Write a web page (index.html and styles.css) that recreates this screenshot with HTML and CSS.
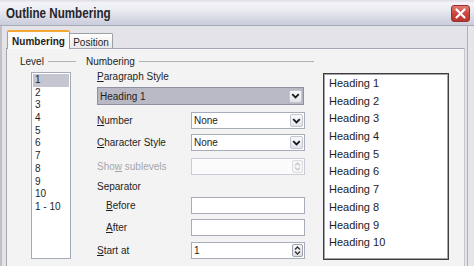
FILE: index.html
```html
<!DOCTYPE html>
<html>
<head>
<meta charset="utf-8">
<title>Outline Numbering</title>
<link rel="stylesheet" href="styles.css">
</head>
<body>
<div class="titlebar">
  <span class="title">Outline Numbering</span>
  <span class="close"><svg width="17" height="15" viewBox="0 0 17 15"><path d="M4.5 3.5 L12.5 11.5 M12.5 3.5 L4.5 11.5" stroke="#fff" stroke-width="2.2" stroke-linecap="round"/></svg></span>
</div>
<div class="main">
  <div class="tabs">
    <div class="tab active">Numbering</div>
    <div class="tab">Position</div>
  </div>
  <div class="panel">
    <div class="col-level">
      <div class="legend"><span>Level</span><i></i></div>
      <ul class="levels">
        <li class="sel">1</li>
        <li>2</li>
        <li>3</li>
        <li>4</li>
        <li>5</li>
        <li>6</li>
        <li>7</li>
        <li>8</li>
        <li>9</li>
        <li>10</li>
        <li>1 - 10</li>
      </ul>
    </div>
    <div class="col-num">
      <div class="legend"><span>Numbering</span><i></i></div>
      <div class="lbl para"><u>P</u>aragraph Style</div>
      <div class="select big"><span>Heading 1</span><b class="btn"><svg width="9" height="6" viewBox="0 0 9 6"><path d="M1.2 1.2 L4.5 4.5 L7.8 1.2" fill="none" stroke="#1a1a1a" stroke-width="1.8"/></svg></b></div>
      <div class="row r-number"><label><u>N</u>umber</label><div class="select"><span>None</span><b class="btn"><svg width="9" height="6" viewBox="0 0 9 6"><path d="M1.2 1.2 L4.5 4.5 L7.8 1.2" fill="none" stroke="#1a1a1a" stroke-width="1.8"/></svg></b></div></div>
      <div class="row r-char"><label><u>C</u>haracter Style</label><div class="select"><span>None</span><b class="btn"><svg width="9" height="6" viewBox="0 0 9 6"><path d="M1.2 1.2 L4.5 4.5 L7.8 1.2" fill="none" stroke="#1a1a1a" stroke-width="1.8"/></svg></b></div></div>
      <div class="row r-show disabled"><label>Sho<u>w</u> sublevels</label><div class="spin off"><span></span><b class="sbtn"><svg width="7" height="11" viewBox="0 0 7 11"><path d="M1 4.5 L3.5 2 L6 4.5 M1 6.5 L3.5 9 L6 6.5" fill="none" stroke="#c4c4c8" stroke-width="1.2"/></svg></b></div></div>
      <div class="lbl sep">Separator</div>
      <div class="row r-before"><label class="indent"><u>B</u>efore</label><div class="input"></div></div>
      <div class="row r-after"><label class="indent"><u>A</u>fter</label><div class="input"></div></div>
      <div class="row r-start"><label><u>S</u>tart at</label><div class="spin"><span>1</span><b class="sbtn on"><svg width="7" height="11" viewBox="0 0 7 11"><path d="M1 4.5 L3.5 2 L6 4.5 M1 6.5 L3.5 9 L6 6.5" fill="none" stroke="#333" stroke-width="1.3"/></svg></b></div></div>
    </div>
    <div class="preview">
      <div>Heading 1</div>
      <div>Heading 2</div>
      <div>Heading 3</div>
      <div>Heading 4</div>
      <div>Heading 5</div>
      <div>Heading 6</div>
      <div>Heading 7</div>
      <div>Heading 8</div>
      <div>Heading 9</div>
      <div>Heading 10</div>
    </div>
  </div>
</div>
</body>
</html>
```

FILE: styles.css
```css
html, body {
  margin: 0;
  padding: 0;
}
body {
  width: 474px;
  height: 266px;
  overflow: hidden;
  background: #e6e6ea;
  font-family: "Liberation Sans", Arial, sans-serif;
  font-size: 10px;
  color: #1e1e22;
  display: flex;
  flex-direction: column;
}
u { text-decoration: underline; text-underline-offset: 1px; }

.titlebar {
  height: 25px;
  flex: none;
  border-bottom: 1px solid #a8aab8;
  background: linear-gradient(#dcdce2 0, #f4f4f8 3px, #eceef4 9px, #d4d6e2 20px, #c9ccda 25px);
  display: flex;
  align-items: center;
  justify-content: space-between;
  padding: 0 4px 0 6px;
}
.title {
  font-weight: bold;
  font-size: 14px;
  color: #25252a;
  display: inline-block;
  transform: scaleX(0.83);
  transform-origin: left center;
  white-space: nowrap;
}
.close {
  width: 19px;
  height: 17px;
  box-sizing: border-box;
  border: 1px solid #9a2e2e;
  border-radius: 3px;
  background: linear-gradient(#e27a72, #c9433c 55%, #b8342f);
  display: flex;
  align-items: center;
  justify-content: center;
  margin-top: 1px;
}

.main {
  flex: 1;
  width: 468px;
  box-sizing: border-box;
  border-left: 2px solid #bfc0c8;
  border-right: 1px solid #aab0c6;
  background: #e4e4e8;
  display: flex;
  flex-direction: column;
}
.tabs {
  display: flex;
  align-items: flex-end;
  height: 18px;
  margin: 4px 0 0 5px;
  position: relative;
  z-index: 1;
}
.tab {
  box-sizing: border-box;
  display: flex;
  align-items: center;
  justify-content: center;
}
.tab.active {
  width: 63px;
  height: 19px;
  margin-bottom: -1px;
  border: 1px solid #9aa2a6;
  border-top: 2px solid #f2a832;
  border-bottom: none;
  border-radius: 2px 2px 0 0;
  background: #fbfbfc;
  font-weight: bold;
  padding-top: 1px;
}
.tab:not(.active) {
  width: 43px;
  height: 15px;
  border: 1px solid #9aa2a6;
  border-left: none;
  border-bottom: none;
  border-radius: 0 2px 0 0;
  background: linear-gradient(#ffffff, #e8e8ea);
  padding-top: 2px;
}

.panel {
  flex: 1;
  width: 459px;
  margin-left: 4px;
  box-sizing: border-box;
  border: 1px solid #a4a8b2;
  border-right-color: #c8c8cc;
  border-bottom: none;
  background: #f3f3f4;
  display: flex;
  align-items: flex-start;
  padding: 6px 0 0 13px;
}

.legend {
  display: flex;
  align-items: center;
  height: 12px;
}
.legend i {
  flex: 1;
  height: 0;
  border-top: 1px solid #b0b0b8;
  margin-left: 4px;
}

.col-level {
  width: 66px;
  flex: none;
}
.col-level .legend { margin-right: 10px; }
.levels {
  list-style: none;
  margin: 5px 0 0 11px;
  padding: 1px;
  width: 40px;
  height: 187px;
  box-sizing: border-box;
  border: 1px solid #a3abbb;
  background: #ffffff;
}
.levels li {
  height: 12.7px;
  line-height: 12.7px;
  padding-left: 2px;
  white-space: nowrap;
}
.levels li.sel { background: #c6c6d0; }

.col-num {
  width: 228px;
  flex: none;
  display: flex;
  flex-direction: column;
}
.lbl {
  height: 12px;
  line-height: 12px;
  padding-left: 11px;
}
.para { margin-top: 4px; }
.sep { margin-top: 6px; }

.select, .input, .spin {
  box-sizing: border-box;
  border: 1px solid #a6adb8;
  background: #ffffff;
  display: flex;
  align-items: center;
  justify-content: space-between;
  padding: 0 1px 0 2px;
}
.select.big {
  margin: 4px 10px 0 11px;
  height: 18px;
  background: #b9b9c5;
  border-color: #8e909e;
  padding-left: 2px;
}
.btn {
  width: 13px;
  height: 13px;
  box-sizing: border-box;
  border: 1px solid #c2c6d2;
  border-radius: 2px;
  background: linear-gradient(#fafafc, #e2e2ea);
  display: flex;
  align-items: center;
  justify-content: center;
}

.row {
  display: flex;
  align-items: center;
  height: 17px;
  padding-left: 11px;
}
.row label {
  width: 94px;
  flex: none;
  box-sizing: border-box;
}
.row label.indent { padding-left: 9px; }
.row .select, .row .input, .row .spin {
  width: 114px;
  height: 17px;
}
.r-number { margin-top: 7px; }
.r-char { margin-top: 5px; }
.r-show { margin-top: 7px; }
.r-before { margin-top: 4px; }
.r-after { margin-top: 5px; }
.r-start { margin-top: 6px; }

.disabled label { color: #a6a6aa; }
.spin.off { border-color: #c8ccd4; background: #fbfbfb; }
.sbtn {
  width: 11px;
  height: 13px;
  box-sizing: border-box;
  border: 1px solid #dadce2;
  border-radius: 2px;
  background: #f6f6f8;
  display: flex;
  align-items: center;
  justify-content: center;
}
.sbtn.on {
  border-color: #9ea2ae;
  background: linear-gradient(#fafafc, #dedee6);
}

.preview {
  margin: 18px 0 0 9px;
  width: 126px;
  height: 187px;
  box-sizing: border-box;
  border: 1px solid #3e3e42;
  box-shadow: inset 0 0 0 1px #a4a4a8;
  background: #ffffff;
  padding: 1px 0 0 5px;
  font-size: 11px;
  color: #222226;
}
.preview div {
  height: 17.7px;
  line-height: 17.7px;
  white-space: nowrap;
}
```
